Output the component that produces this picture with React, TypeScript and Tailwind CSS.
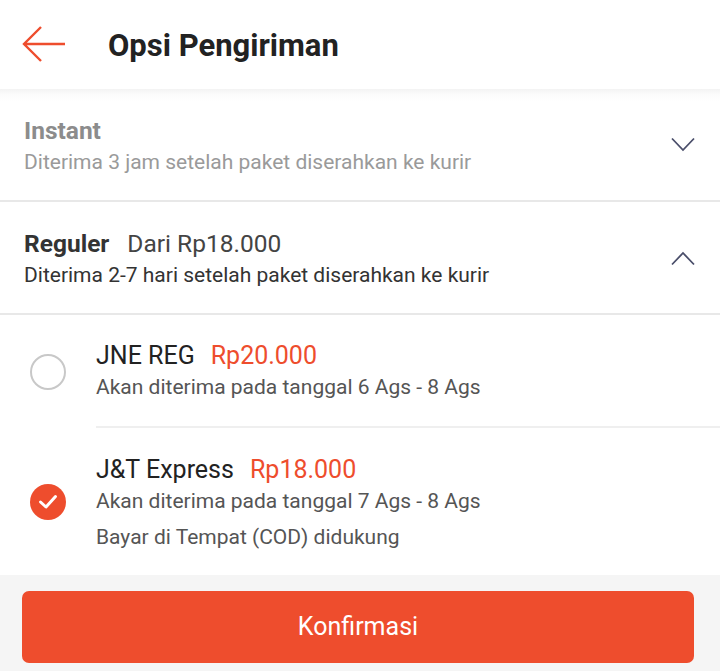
import { useState } from "react";

type Courier = {
  id: string;
  name: string;
  price: string;
  eta: string;
  cod?: boolean;
};

const couriers: Courier[] = [
  { id: "jne", name: "JNE REG", price: "Rp20.000", eta: "Akan diterima pada tanggal 6 Ags - 8 Ags" },
  { id: "jnt", name: "J&T Express", price: "Rp18.000", eta: "Akan diterima pada tanggal 7 Ags - 8 Ags", cod: true },
];

function Chevron({ up }: { up?: boolean }) {
  return (
    <svg width="26" height="16" viewBox="0 0 26 16" fill="none" className="shrink-0">
      <path
        d={up ? "M2 14.5 L13 3 L24 14.5" : "M2 1.5 L13 13 L24 1.5"}
        stroke="#4a4e6a"
        strokeWidth="1.8"
      />
    </svg>
  );
}

function Radio({ checked }: { checked: boolean }) {
  if (checked) {
    return (
      <span className="flex h-9 w-9 items-center justify-center rounded-full bg-[#ee4d2d]">
        <svg width="22" height="18" viewBox="0 0 22 18" fill="none">
          <path d="M3.5 9 L9 14 L18.5 3.5" stroke="white" strokeWidth="3" strokeLinecap="round" strokeLinejoin="round" />
        </svg>
      </span>
    );
  }
  return <span className="block h-9 w-9 rounded-full border-2 border-[#c8c8c8]" />;
}

export default function App() {
  const [selected, setSelected] = useState("jnt");

  return (
    <div className="flex h-[671px] w-[720px] flex-col overflow-hidden bg-white font-['Roboto',sans-serif]">
      {/* header */}
      <div className="flex h-[89px] shrink-0 items-center bg-white">
        <button type="button" className="ml-[22px] flex h-11 w-11 items-center">
          <svg width="44" height="38" viewBox="0 0 44 38" fill="none">
            <path d="M43 18 H2 M19 1 L2 18 L19 35" stroke="#ee4d2d" strokeWidth="2.4" />
          </svg>
        </button>
        <h1 className="ml-[42px] mt-[3px] text-[31px] font-bold text-[#222]">Opsi Pengiriman</h1>
      </div>

      <div className="flex-1 bg-gradient-to-b from-[#f3f3f3] via-[#fcfcfc] to-white to-[12px] bg-[length:100%_12px] bg-no-repeat">
        {/* instant */}
        <div className="flex h-[113px] items-center justify-between border-b-2 border-[#e8e8e8] pl-[24px] pr-[24px]">
          <div className="self-start pt-[27px]">
            <p className="text-[24.5px] font-bold leading-[30px] text-[#8c8c8c]">Instant</p>
            <p className="mt-[2px] text-[21px] leading-[28px] text-[#9a9a9a]">
              Diterima 3 jam setelah paket diserahkan ke kurir
            </p>
          </div>
          <Chevron />
        </div>

        {/* reguler */}
        <div className="flex h-[113px] items-center justify-between border-b-2 border-[#e8e8e8] pl-[24px] pr-[24px]">
          <div className="self-start pt-[27px]">
            <p className="text-[24.5px] leading-[30px] text-[#444]">
              <span className="font-bold text-[#333]">Reguler</span>
              <span className="ml-[18px]">Dari Rp18.000</span>
            </p>
            <p className="mt-[2px] text-[21px] leading-[28px] text-[#333]">
              Diterima 2-7 hari setelah paket diserahkan ke kurir
            </p>
          </div>
          <Chevron up />
        </div>

        {/* couriers */}
        {couriers.map((c, i) => (
          <button
            key={c.id}
            type="button"
            onClick={() => setSelected(c.id)}
            className="flex w-full items-center text-left"
          >
            <span className="flex w-[96px] shrink-0 justify-center pr-[1px]">
              <Radio checked={selected === c.id} />
            </span>
            <span
              className={
                i === 0
                  ? "flex h-[113px] flex-1 flex-col border-b-2 border-[#efefef] pt-[26px]"
                  : "flex h-[147px] flex-1 flex-col pt-[27px]"
              }
            >
              <span className="block text-[25px] leading-[30px] text-[#222]">
                {c.name}
                <span className="ml-[16px] text-[#ee4d2d]">{c.price}</span>
              </span>
              <span className="mt-[2px] block text-[21px] leading-[28px] text-[#555]">{c.eta}</span>
              {c.cod && (
                <span className="mt-[8px] block text-[21px] leading-[28px] text-[#555]">
                  Bayar di Tempat (COD) didukung
                </span>
              )}
            </span>
          </button>
        ))}
      </div>

      {/* footer */}
      <div className="shrink-0 bg-[#f5f5f5] pb-[8px] pl-[22px] pr-[26px] pt-[16px]">
        <button
          type="button"
          className="flex h-[72px] w-full items-center justify-center rounded-[7px] bg-[#ee4d2d] text-[25px] text-white"
        >
          Konfirmasi
        </button>
      </div>
    </div>
  );
}
